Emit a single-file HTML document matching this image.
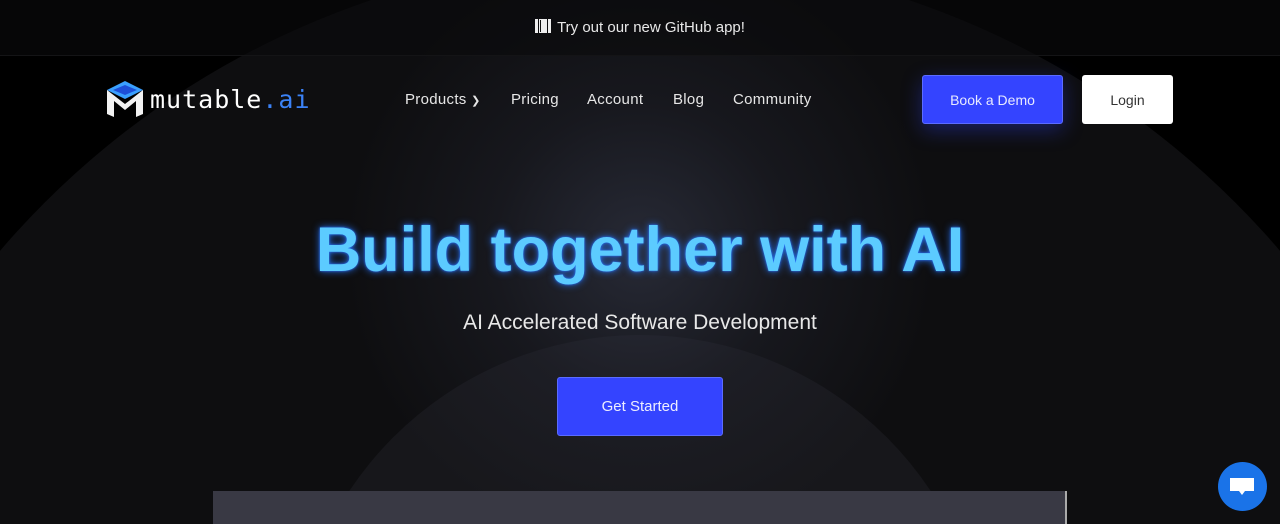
<!DOCTYPE html>
<html><head><style>
*{margin:0;padding:0;box-sizing:border-box}
html,body{width:1280px;height:524px;overflow:hidden}
body{background:#000;font-family:"Liberation Sans",sans-serif;position:relative;color:#fff}
.c1{position:absolute;left:-202px;top:-44px;width:1684px;height:1684px;border-radius:50%;background:#0e0e10}
.c2{position:absolute;left:291px;top:335px;width:698px;height:698px;border-radius:50%;background:#17171b}
.glow{position:absolute;left:340px;top:-50px;width:600px;height:600px;border-radius:50%;background:radial-gradient(circle,rgba(60,65,85,.55) 0%,rgba(40,42,55,.35) 35%,rgba(20,20,25,0) 70%)}
.top{position:absolute;left:0;top:0;width:1280px;height:56px;background:rgba(10,10,12,.6);text-align:center;line-height:56px;font-size:15px;color:#e8e8e8;border-bottom:1px solid #141416}
.logo{position:absolute;left:106px;top:80px;display:flex;align-items:center}
.logo span{font-family:"DejaVu Sans Mono","Liberation Mono",monospace;font-size:25px;letter-spacing:1px;margin-left:6px}
nav{position:absolute;top:91px;left:405px;font-size:15px;color:#e6e6e6;letter-spacing:.3px}
nav a{position:absolute;white-space:nowrap}
.btn{position:absolute;font-size:14px;display:flex;align-items:center;justify-content:center;border-radius:3px}
h1{position:absolute;top:214px;left:0;width:1280px;text-align:center;font-size:63px;font-weight:bold;color:#5ccbff;text-shadow:0 0 8px rgba(40,120,255,.9),0 0 2px #2a6cff}
.sub{position:absolute;top:311px;width:1280px;text-align:center;font-size:21px;color:#e8e8e8}
.panel{position:absolute;left:213px;top:491px;width:854px;height:40px;background:#393944;border-right:2px solid #aaa}
.chat{position:absolute;left:1218px;top:462px;width:49px;height:49px;border-radius:50%;background:#1a73e8}
</style></head><body>
<div class="c1"></div><div class="c2"></div><div class="glow"></div>
<div class="top"><svg width="16" height="14" viewBox="0 0 16 14" style="vertical-align:-1px;margin-right:6px"><rect x="0" y="0" width="3" height="14" fill="#eee"/><rect x="4" y="0" width="8" height="14" fill="#eee"/><rect x="5" y="1" width="1" height="12" fill="#111"/><rect x="13" y="0" width="3" height="14" fill="#eee"/></svg>Try out our new GitHub app!</div>
<div class="logo">
<svg width="38" height="38" viewBox="0 0 38 38"><polygon points="19,1 37,10 19,19 1,10" fill="#3aa0ff"/><polygon points="19,5 31,10 19,15 7,10" fill="#1d4fd8"/><path d="M1 10 L1 34 L8 37 L8 21 L19 30 L30 21 L30 37 L37 34 L37 10 L19 24 Z" fill="#f2f2f2"/></svg>
<span>mutable<b style="color:#3b82f6;font-weight:normal">.ai</b></span></div>
<nav><a style="left:0">Products <span style="font-size:11px">&#10095;</span></a><a style="left:106px">Pricing</a><a style="left:182px">Account</a><a style="left:268px">Blog</a><a style="left:328px">Community</a></nav>
<div class="btn" style="left:922px;top:75px;width:141px;height:49px;background:#3444ff;border:1px solid #5b6cff;box-shadow:0 6px 20px rgba(50,70,255,.35);color:#e8eaff">Book a Demo</div>
<div class="btn" style="left:1082px;top:75px;width:91px;height:49px;background:#fff;color:#333">Login</div>
<h1>Build together with AI</h1>
<div class="sub">AI Accelerated Software Development</div>
<div class="btn" style="left:557px;top:377px;width:166px;height:59px;background:#3444ff;border:1px solid #5b6cff;color:#eef;font-size:15px">Get Started</div>
<div class="panel"></div>
<div class="chat"><svg width="49" height="49" viewBox="0 0 49 49"><path d="M12 16h24v13h-9l-3 4-3-4h-9z" fill="#fff"/></svg></div>
</body></html>
